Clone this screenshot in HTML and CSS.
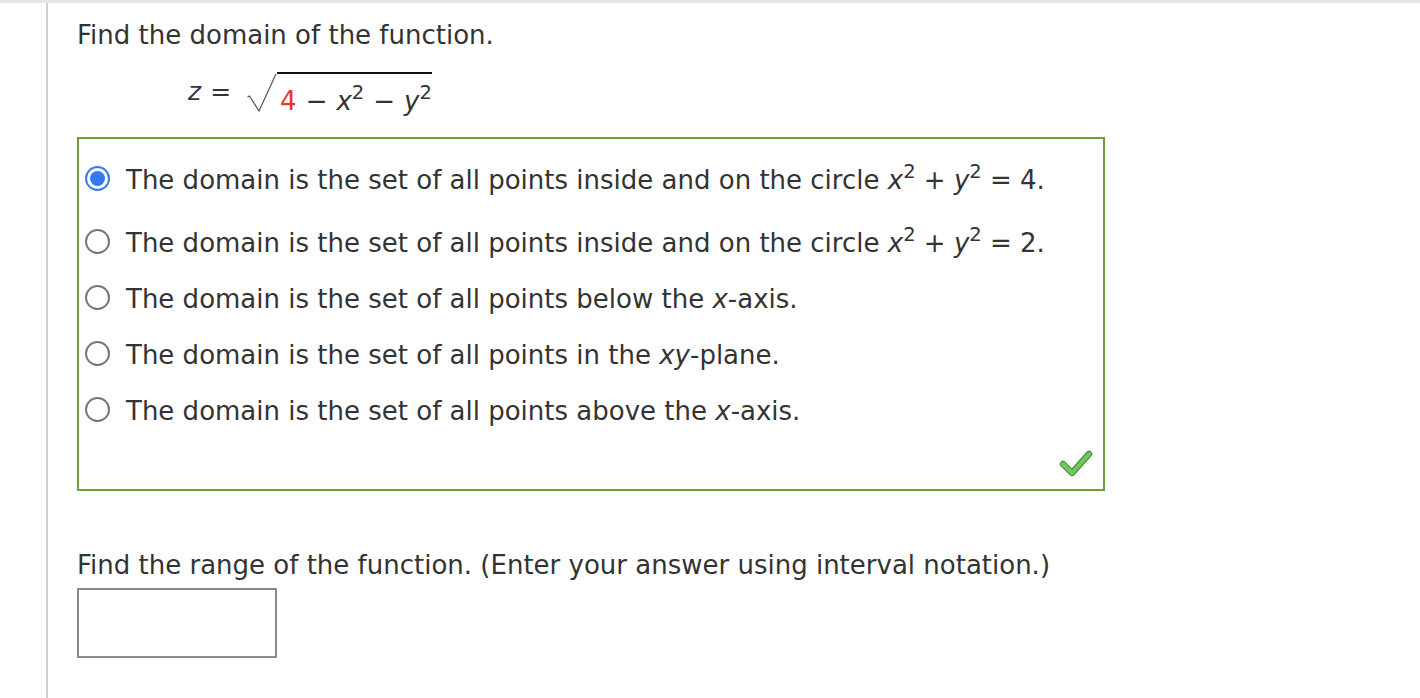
FILE: index.html
```html
<!DOCTYPE html>
<html>
<head>
<meta charset="utf-8">
<link rel="stylesheet" href="styles.css">
</head>
<body>
<div class="topbar"></div>
<div class="page">
  <div class="content">
    <p class="prompt">Find the domain of the function.</p>
    <div class="equation">
      <span class="lhs"><span class="var">z</span><span class="eq">=</span></span>
      <svg class="radical" width="30" height="40" viewBox="0 0 30 40"><path d="M0.5 24 L2.5 23 L12 38 L29 1" fill="none" stroke="#555" stroke-width="1.2"/></svg>
      <span class="radicand"><span class="red">4</span><span class="op">&minus;</span><span class="var">x</span><sup>2</sup><span class="op">&minus;</span><span class="var">y</span><sup>2</sup></span>
    </div>
    <div class="answer-box">
      <div class="option">
        <span class="radio checked"><span class="dot"></span></span>
        <span class="label">The domain is the set of all points inside and on the circle <i>x</i><sup>2</sup> + <i>y</i><sup>2</sup> = 4.</span>
      </div>
      <div class="option">
        <span class="radio"></span>
        <span class="label">The domain is the set of all points inside and on the circle <i>x</i><sup>2</sup> + <i>y</i><sup>2</sup> = 2.</span>
      </div>
      <div class="option">
        <span class="radio"></span>
        <span class="label">The domain is the set of all points below the <i>x</i>-axis.</span>
      </div>
      <div class="option">
        <span class="radio"></span>
        <span class="label">The domain is the set of all points in the <i>xy</i>-plane.</span>
      </div>
      <div class="option">
        <span class="radio"></span>
        <span class="label">The domain is the set of all points above the <i>x</i>-axis.</span>
      </div>
      <div class="check-row">
        <svg class="check" width="34" height="28" viewBox="0 0 34 28">
          <path d="M4 14 L13 23 L30 4" fill="none" stroke="#4c9a3c" stroke-width="6.5" stroke-linecap="round" stroke-linejoin="round"/>
          <path d="M4 14 L13 23 L30 4" fill="none" stroke="#74c466" stroke-width="4" stroke-linecap="round" stroke-linejoin="round"/>
        </svg>
      </div>
    </div>
    <p class="prompt range">Find the range of the function. (Enter your answer using interval notation.)</p>
    <div class="input-box"></div>
  </div>
</div>
</body>
</html>
```

FILE: styles.css
```css
html, body {
  margin: 0;
  padding: 0;
  background: #fff;
}
body {
  font-family: "DejaVu Sans", Verdana, sans-serif;
  color: #333;
  font-size: 26px;
  width: 1420px;
  height: 698px;
  overflow: hidden;
}
.topbar {
  height: 3px;
  background: #e6e6e6;
}
.page {
  margin-left: 46px;
  border-left: 2px solid #cfcfcf;
  height: 695px;
}
.content {
  padding-left: 29px;
}
.prompt {
  margin: 0;
  padding-top: 17px;
  line-height: 30px;
}
.equation {
  display: flex;
  align-items: flex-start;
  margin-left: 111px;
  margin-top: 22px;
  height: 53px;
}
.lhs {
  margin-top: 5px;
  line-height: 30px;
  font-size: 25px;
}
.var {
  font-style: italic;
}
.eq {
  margin: 0 16px 0 9px;
}
.radical {
  display: block;
  margin-top: 1px;
}
.radicand {
  border-top: 2px solid #111;
  padding: 12px 0 0 3px;
  line-height: 30px;
}
.red {
  color: #e5382c;
}
.op {
  margin: 0 9px;
}
sup {
  font-size: 0.75em;
  line-height: 0;
  vertical-align: 0.55em;
}
.answer-box {
  margin-top: 12px;
  width: 1024px;
  height: 350px;
  border: 2px solid #6e9d3e;
  display: flex;
  flex-direction: column;
}
.option {
  display: flex;
  align-items: center;
  padding-left: 6px;
  height: 56px;
  line-height: 30px;
}
.option:first-child {
  margin-top: 11px;
}
.option:nth-child(2) {
  margin-top: 7px;
}
.radio {
  width: 21px;
  height: 21px;
  border: 2px solid #767676;
  border-radius: 50%;
  margin-right: 16px;
  display: flex;
  align-items: center;
  justify-content: center;
  flex: none;
}
.radio.checked {
  border-color: #3478f6;
}
.dot {
  width: 15px;
  height: 15px;
  border-radius: 50%;
  background: #3478f6;
}
.label {
  padding-top: 4px;
}
.label i {
  font-style: italic;
}
.check-row {
  display: flex;
  justify-content: flex-end;
  padding-right: 10px;
  margin-top: 13px;
}
.check {
  display: block;
}
.range {
  padding-top: 59px;
}
.input-box {
  margin-top: 8px;
  width: 196px;
  height: 66px;
  border: 2px solid #8a8a8a;
}
```
